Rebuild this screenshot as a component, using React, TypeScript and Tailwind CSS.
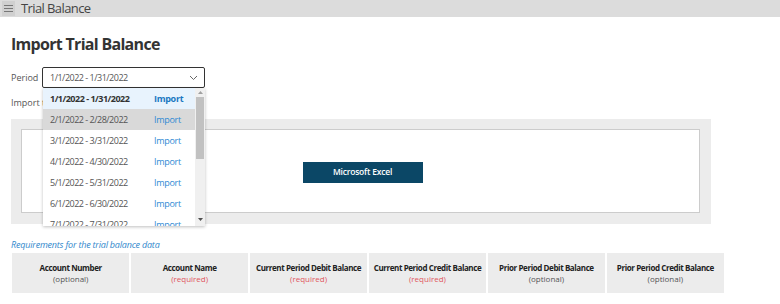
import React from "react";

const periods = [
  "1/1/2022 - 1/31/2022",
  "2/1/2022 - 2/28/2022",
  "3/1/2022 - 3/31/2022",
  "4/1/2022 - 4/30/2022",
  "5/1/2022 - 5/31/2022",
  "6/1/2022 - 6/30/2022",
  "7/1/2022 - 7/31/2022",
];

const cols = [
  { name: "Account Number", req: false },
  { name: "Account Name", req: true },
  { name: "Current Period Debit Balance", req: true },
  { name: "Current Period Credit Balance", req: true },
  { name: "Prior Period Debit Balance", req: false },
  { name: "Prior Period Credit Balance", req: false },
];

export default function App() {
  return (
    <div
      className="w-[780px] h-[304px] bg-white overflow-hidden text-[#333]"
      style={{ fontFamily: '"Open Sans", "Noto Sans", sans-serif' }}
    >
      {/* top bar */}
      <div className="h-[17px] bg-[#dcdcdc] flex items-center">
        <div className="ml-[2px] w-[13px] h-[15px] bg-[#d0d0d0] flex flex-col justify-center items-center gap-[2px]">
          <div className="w-[9px] h-px bg-[#777]" />
          <div className="w-[9px] h-px bg-[#777]" />
          <div className="w-[9px] h-px bg-[#777]" />
        </div>
        <span className="ml-[6px] text-[13px] leading-none text-[#444] tracking-[-0.6px]">Trial Balance</span>
      </div>

      <div className="px-[11px]">
        <h1 className="mt-[17px] text-[16px] font-bold leading-[20px] text-[#333] tracking-[-0.7px]">
          Import Trial Balance
        </h1>

        <div className="mt-[13px] flex items-center h-[21px]">
          <span className="text-[9px] text-[#555] w-[31px]">Period</span>
          <div className="relative w-[163px] h-[21px]">
            <div className="w-full h-full border-[1.5px] border-[#333] rounded-[2px] flex items-center pl-[7px] pr-[6px]">
              <span className="text-[9px] text-[#555] tracking-[-0.5px] flex-1">1/1/2022 - 1/31/2022</span>
              <svg width="9" height="6" viewBox="0 0 9 6">
                <path d="M1 1 L4.5 4.5 L8 1" fill="none" stroke="#666" strokeWidth="1" />
              </svg>
            </div>
            {/* dropdown */}
            <div className="absolute left-[1px] top-[21px] w-[162px] h-[138px] bg-white z-10 shadow-[0_1px_3px_rgba(0,0,0,0.25)] flex overflow-hidden">
              <div className="flex-1 flex flex-col">
                {periods.map((p, i) => (
                  <div
                    key={p}
                    className={
                      "h-[21px] shrink-0 flex items-center pl-[7px] " +
                      (i === 0 ? "bg-[#e8f3fd]" : i === 1 ? "bg-[#d9d9d9]" : "bg-white")
                    }
                  >
                    <span
                      className={
                        "w-[104px] text-[9px] tracking-[-0.5px] " +
                        (i === 0 ? "font-bold text-[#333]" : "text-[#555]")
                      }
                    >
                      {p}
                    </span>
                    <span
                      className={
                        "text-[9px] tracking-[-0.3px] " + (i === 0 ? "font-bold text-[#1a78c2]" : "text-[#2f8ad4]")
                      }
                    >
                      Import
                    </span>
                  </div>
                ))}
              </div>
              <div className="w-[10px] bg-[#f0f0f0] flex flex-col items-center">
                <div className="h-[9px] flex items-center justify-center">
                  <svg width="5" height="3" viewBox="0 0 5 3">
                    <path d="M0 3 L2.5 0 L5 3 Z" fill="#a0a0a0" />
                  </svg>
                </div>
                <div className="w-[8px] h-[62px] bg-[#c1c1c1]" />
                <div className="flex-1" />
                <div className="h-[9px] mb-[2px] flex items-center justify-center">
                  <svg width="5" height="3" viewBox="0 0 5 3">
                    <path d="M0 0 L2.5 3 L5 0 Z" fill="#505050" />
                  </svg>
                </div>
              </div>
            </div>
          </div>
        </div>

        <div className="mt-[8px] text-[9px] text-[#555] leading-[14px]">Import trial balance</div>

        <div className="mt-[9px] w-[700px] h-[105px] bg-[#ececec] p-[10px] pb-[11px]">
          <div className="w-[679px] h-full bg-white border border-[#cccccc] flex items-center justify-center">
            <button className="w-[120px] h-[21px] bg-[#0b4766] text-white text-[8.5px] font-semibold tracking-[-0.2px] ml-[4px] mt-[2px]">
              Microsoft Excel
            </button>
          </div>
        </div>

        <div className="mt-[15px] text-[9px] italic text-[#3087cc] leading-[12px] tracking-[-0.2px]">
          Requirements for the trial balance data
        </div>

        <div className="mt-[2px] ml-[1px] w-[712px] flex gap-[1.5px]">
          {cols.map((c) => (
            <div
              key={c.name}
              className="flex-1 h-[40px] bg-[#ececec] flex flex-col items-center justify-center leading-[11px]"
            >
              <span className="text-[8px] font-bold text-[#222] tracking-[-0.4px]">{c.name}</span>
              <span className={"text-[8px] " + (c.req ? "text-[#e05560]" : "text-[#555]")}>
                {c.req ? "(required)" : "(optional)"}
              </span>
            </div>
          ))}
        </div>
      </div>
    </div>
  );
}
